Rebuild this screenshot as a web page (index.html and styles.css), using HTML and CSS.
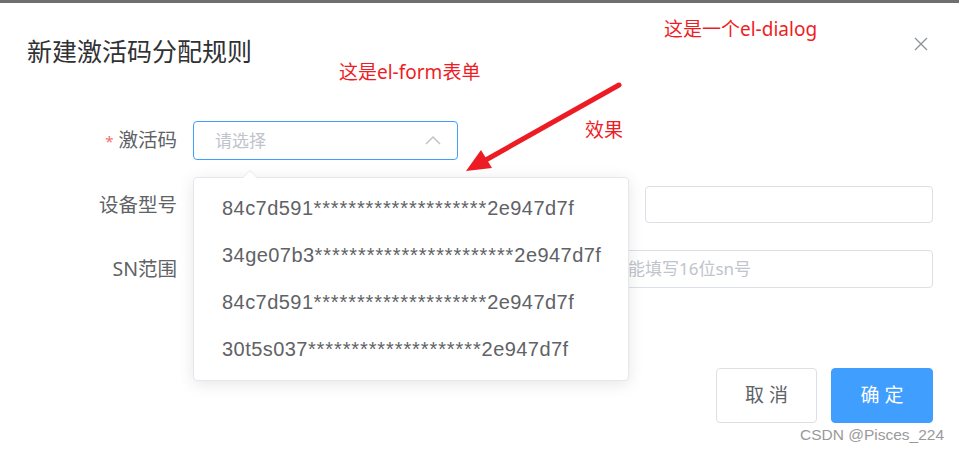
FILE: index.html
```html
<!DOCTYPE html>
<html lang="zh-CN">
<head>
<meta charset="utf-8">
<title>新建激活码分配规则</title>
<link rel="stylesheet" href="styles.css">
</head>
<body>
<div class="page">
  <div class="topbar"></div>
  <div class="dialog">
    <header class="dlg-header">
      <span class="dlg-title">新建激活码分配规则</span>
      <button class="dlg-close" type="button" aria-label="关闭">
        <svg viewBox="0 0 14 14" width="14" height="14"><path d="M1 1L13 13M13 1L1 13" fill="none" stroke="#909399" stroke-width="1.4"/></svg>
      </button>
    </header>

    <form class="form">
      <div class="form-item">
        <label class="form-label"><span class="req">*</span>激活码</label>
        <div class="form-content">
          <div class="select is-focus">
            <span class="placeholder">请选择</span>
            <svg class="chev" viewBox="0 0 16 9" width="16" height="9"><path d="M1 8L8 1L15 8" fill="none" stroke="#c0c4cc" stroke-width="1.5"/></svg>
          </div>
        </div>
      </div>
      <div class="form-item">
        <label class="form-label">设备型号</label>
        <div class="form-content end">
          <div class="input input-model"></div>
        </div>
      </div>
      <div class="form-item">
        <label class="form-label">SN范围</label>
        <div class="form-content end">
          <div class="input input-sn"><span class="placeholder">只能填写16位sn号</span></div>
        </div>
      </div>
    </form>

    <footer class="dlg-footer">
      <button class="btn" type="button">取 消</button>
      <button class="btn primary" type="button">确 定</button>
    </footer>
  </div>

  <ul class="dropdown">
    <li class="option">84c7d591<span class="mask">********************</span>2e947d7f</li>
    <li class="option">34ge07b3<span class="mask">***********************</span>2e947d7f</li>
    <li class="option">84c7d591<span class="mask">********************</span>2e947d7f</li>
    <li class="option">30t5s037<span class="mask">********************</span>2e947d7f</li>
  </ul>

  <span class="note note-dialog">这是一个el-dialog</span>
  <span class="note note-form">这是el-form表单</span>
  <span class="note note-effect">效果</span>
  <svg class="note-arrow" viewBox="0 0 959 451" width="959" height="451">
    <line x1="619" y1="85" x2="484" y2="161" stroke="#ed1c24" stroke-width="5" stroke-linecap="round"/>
    <polygon points="466,171 481,150 492,168" fill="#ed1c24"/>
  </svg>

  <span class="watermark">CSDN @Pisces_224</span>
</div>
</body>
</html>
```

FILE: styles.css
```css
* { box-sizing: border-box; }

html, body {
  margin: 0;
  padding: 0;
  background: #fff;
}

body {
  width: 959px;
  height: 451px;
  overflow: hidden;
  font-family: "Noto Sans", "Noto Sans CJK SC", sans-serif;
  color: #606266;
}

.page {
  position: relative;
  width: 959px;
  height: 451px;
}

.topbar {
  height: 3px;
  background: #6f6f6f;
}

/* header */
.dlg-header {
  display: flex;
  justify-content: space-between;
  align-items: flex-start;
  padding: 30px 31px 0 27px;
}

.dlg-title {
  font-family: "Noto Sans CJK SC", sans-serif;
  font-size: 25px;
  line-height: 34px;
  color: #303133;
}

.dlg-close {
  display: block;
  margin-top: 4px;
  width: 14px;
  height: 14px;
  padding: 0;
  border: 0;
  background: none;
}

.dlg-close svg { display: block; }

/* form */
.form {
  margin: 54px 0 0;
  padding-right: 26px;
  display: flex;
  flex-direction: column;
  gap: 25px;
}

.form-item {
  display: flex;
  align-items: center;
  height: 39px;
}

.form-label {
  width: 177px;
  flex: none;
  text-align: right;
  font-size: 19.5px;
  line-height: 26px;
  color: #606266;
}

.req {
  color: #f56c6c;
  margin-right: 5px;
  font-size: 15px;
}

.form-content {
  flex: 1;
  display: flex;
  margin-left: 16px;
}

.form-content.end { justify-content: flex-end; }

.select {
  width: 265px;
  height: 39px;
  border: 1px solid #409eff;
  border-radius: 4px;
  display: flex;
  align-items: center;
  justify-content: space-between;
  padding: 0 16px 0 21px;
}

.chev { display: block; }

.placeholder {
  font-size: 17px;
  line-height: 24px;
  color: #c0c4cc;
}

.input {
  border: 1px solid #dcdfe6;
  border-radius: 4px;
  display: flex;
  align-items: center;
  padding-left: 20px;
}

.input-model {
  width: 288px;
  height: 37px;
}

.input-sn {
  width: 343px;
  height: 38px;
}

/* footer */
.dlg-footer {
  display: flex;
  justify-content: flex-end;
  gap: 14px;
  margin-top: 80px;
  padding-right: 26px;
}

.btn {
  height: 55px;
  width: 101px;
  border: 1px solid #dcdfe6;
  border-radius: 4px;
  background: #fff;
  color: #606266;
  font-family: "Noto Sans", "Noto Sans CJK SC", sans-serif;
  font-size: 19px;
  padding: 0 0 3px;
}

.btn.primary {
  width: 102px;
  background: #409eff;
  border-color: #409eff;
  color: #fff;
}

/* select dropdown popper */
.dropdown {
  position: absolute;
  left: 193px;
  top: 177px;
  width: 436px;
  height: 204px;
  margin: 0;
  padding: 7px 0;
  list-style: none;
  background: #fff;
  border: 1px solid #e4e7ed;
  border-radius: 4px;
  box-shadow: 0 3px 16px rgba(0, 0, 0, 0.1);
}

.dropdown::before,
.dropdown::after {
  content: "";
  position: absolute;
  left: 49px;
  width: 0;
  height: 0;
  border-style: solid;
  border-width: 0 7px 7px;
  border-color: transparent;
}

.dropdown::before {
  top: -8px;
  border-bottom-color: #e4e7ed;
}

.dropdown::after {
  top: -7px;
  border-bottom-color: #fff;
}

.option {
  height: 47px;
  line-height: 47px;
  padding-left: 28px;
  font-family: "Liberation Sans", "Noto Sans CJK SC", sans-serif;
  font-size: 20px;
  letter-spacing: 0.45px;
  color: #606266;
  white-space: nowrap;
}

.mask { letter-spacing: 0.9px; }

/* annotations drawn over the screenshot */
.note {
  position: absolute;
  font-family: "Noto Sans", "Noto Sans CJK SC", sans-serif;
  font-size: 19px;
  line-height: 26px;
  color: #ee1d25;
  white-space: nowrap;
}

.note-dialog { left: 664px; top: 16px; }
.note-form { left: 339px; top: 59px; }
.note-effect { left: 585px; top: 117px; }

.note-arrow {
  position: absolute;
  left: 0;
  top: 0;
  pointer-events: none;
}

.watermark {
  position: absolute;
  left: 800px;
  top: 426px;
  font-family: "Liberation Sans", sans-serif;
  font-size: 15.5px;
  line-height: 18px;
  color: #9a9a9a;
  white-space: nowrap;
}
```
